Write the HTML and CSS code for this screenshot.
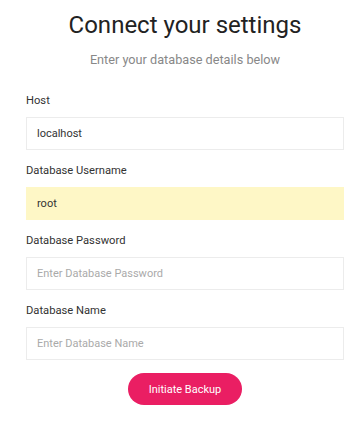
FILE: index.html
```html
<!DOCTYPE html>
<html>
<head>
<meta charset="utf-8">
<link rel="stylesheet" href="styles.css">
</head>
<body>
<div class="wrap">
  <h1 class="title">Connect your settings</h1>
  <p class="subtitle">Enter your database details below</p>
  <form class="form">
    <div class="field">
      <label class="label">Host</label>
      <input class="input" type="text" value="localhost">
    </div>
    <div class="field">
      <label class="label">Database Username</label>
      <input class="input input-filled" type="text" value="root">
    </div>
    <div class="field">
      <label class="label">Database Password</label>
      <input class="input" type="password" placeholder="Enter Database Password">
    </div>
    <div class="field">
      <label class="label">Database Name</label>
      <input class="input" type="text" placeholder="Enter Database Name">
    </div>
    <div class="actions">
      <button class="btn" type="button">Initiate Backup</button>
    </div>
  </form>
</div>
</body>
</html>
```
FILE: styles.css
```css
* { box-sizing: border-box; }
html, body { margin: 0; padding: 0; background: #fff; }
body {
  font-family: Roboto, "Liberation Sans", sans-serif;
  color: #333;
}
.wrap {
  margin-left: 26px;
  width: 318px;
  padding-top: 11px;
}
.title {
  margin: 0;
  font-size: 24px;
  line-height: 28px;
  font-weight: 400;
  text-align: center;
  color: #222;
}
.subtitle {
  margin: 11px 0 0;
  font-size: 12.7px;
  line-height: 20px;
  text-align: center;
  color: #888;
}
.form {
  margin-top: 22px;
}
.field {
  display: flex;
  flex-direction: column;
  margin-bottom: 12px;
}
.label {
  font-size: 11.2px;
  line-height: 16px;
  padding-top: 1px;
  color: #333;
  margin-bottom: 8px;
}
.input {
  height: 33px;
  width: 100%;
  border: 1px solid #ececec;
  border-radius: 0;
  padding: 0 10px;
  font-family: Roboto, "Liberation Sans", sans-serif;
  font-size: 11px;
  color: #333;
  background: #fff;
  outline: none;
}
.input::placeholder { color: #aaa; }
.input-filled {
  background: #fef7c6;
  border-color: #fef7c6;
}
.actions {
  display: flex;
  justify-content: center;
  padding-top: 1px;
}
.btn {
  width: 114px;
  height: 32px;
  border: none;
  border-radius: 16px;
  background: #ea1e63;
  color: #fff;
  font-family: Roboto, "Liberation Sans", sans-serif;
  font-size: 11px;
  cursor: pointer;
}
```
